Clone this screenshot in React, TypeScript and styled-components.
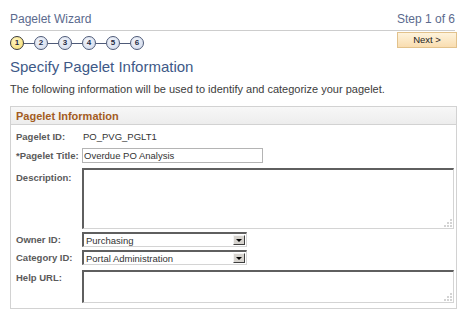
import React from "react";
import styled, { createGlobalStyle } from "styled-components";

const GlobalStyle = createGlobalStyle`
  html, body { margin: 0; padding: 0; background: #ffffff; }
  body { font-family: "Liberation Sans", Arial, sans-serif; color: #333; }
  * { box-sizing: border-box; }
`;

const Page = styled.div`
  width: 474px;
  height: 313px;
  overflow: hidden;
  background: #fff;
`;

const TitleBar = styled.div`
  display: flex;
  justify-content: space-between;
  align-items: flex-end;
  margin: 0 19px 0 10px;
  padding: 12px 0 4px;
  border-bottom: 1px solid #cdcdcd;
  font-size: 12px;
  line-height: 14px;
  color: #5b6a8e;
`;

const NavRow = styled.div`
  display: flex;
  justify-content: space-between;
  align-items: flex-start;
  margin: 0 17px 0 10px;
`;

const Steps = styled.div`
  display: flex;
  align-items: center;
  margin-top: 5px;
`;

const StepCircle = styled.div<{ $active?: boolean }>`
  width: 14px;
  height: 14px;
  border-radius: 50%;
  border: 1.3px solid ${(p) => (p.$active ? "#3a3a3a" : "#4e5a78")};
  background: ${(p) =>
    p.$active
      ? "radial-gradient(circle at 40% 35%, #fff6c4, #f6dc6a)"
      : "radial-gradient(circle at 40% 35%, #f2f5fb, #cfd8ea)"};
  display: flex;
  align-items: center;
  justify-content: center;
  font-size: 8px;
  font-weight: bold;
  color: #1f2a44;
  line-height: 1;
`;

const Connector = styled.div`
  width: 10px;
  height: 1px;
  background: #4e5a78;
`;

const NextButton = styled.button`
  margin-top: 1px;
  width: 60px;
  height: 16px;
  padding: 0;
  border: 1px solid #e2c28c;
  background: linear-gradient(#fef3dc, #f9ddb0);
  font-family: "Liberation Sans", Arial, sans-serif;
  font-size: 9.5px;
  color: #222;
  line-height: 14px;
  text-align: center;
`;

const Heading = styled.h1`
  margin: 8px 0 0 10px;
  font-size: 15px;
  line-height: 18px;
  font-weight: normal;
  color: #3e5987;
`;

const Intro = styled.p`
  margin: 7px 0 0 10px;
  font-size: 11px;
  line-height: 13px;
  color: #3c3c3c;
`;

const GroupBox = styled.section`
  margin: 10px 17px 0 10px;
  border: 1px solid #d2d2d2;
`;

const GroupHeader = styled.div`
  height: 18px;
  border-bottom: 1px solid #d2d2d2;
  background: linear-gradient(#f7f7f7, #ededed);
  padding-left: 5px;
  display: flex;
  align-items: center;
  font-size: 11px;
  font-weight: bold;
  color: #a35c1f;
`;

const Form = styled.div`
  padding: 5px 2px 5px 5px;
`;

const FieldRow = styled.div<{ $gap: number; $top?: boolean }>`
  display: grid;
  grid-template-columns: 66px 1fr;
  align-items: ${(p) => (p.$top ? "start" : "center")};
  margin-top: ${(p) => p.$gap}px;
`;

const Label = styled.label<{ $pad?: number }>`
  font-size: 9.5px;
  font-weight: bold;
  line-height: 13px;
  color: #5a5a5a;
  padding-top: ${(p) => p.$pad ?? 0}px;
  white-space: nowrap;
`;

const StaticValue = styled.span`
  font-size: 9.5px;
  line-height: 13px;
  color: #333;
  padding-left: 1px;
`;

const TextInput = styled.input`
  width: 181px;
  height: 15px;
  border: 1px solid #b4b4b4;
  padding: 0 1px;
  font-family: "Liberation Sans", Arial, sans-serif;
  font-size: 9.5px;
  color: #333;
  outline: none;
`;

const dot = (r: number, b: number) =>
  `radial-gradient(circle, #a8a8a8 45%, transparent 55%) right ${r}px bottom ${b}px / 2px 2px no-repeat`;

const TextArea = styled.textarea<{ $h: number }>`
  display: block;
  width: 372px;
  height: ${(p) => p.$h}px;
  border-style: solid;
  border-width: 2px 1px 1px 2px;
  border-color: #5f5f5f #d4d4d4 #d4d4d4 #5f5f5f;
  resize: none;
  outline: none;
  padding: 1px 2px;
  font-family: "Liberation Sans", Arial, sans-serif;
  font-size: 9.5px;
  background: ${[dot(1, 1), dot(4, 1), dot(7, 1), dot(1, 4), dot(4, 4), dot(1, 7)].join(", ")}, #fff;
`;

const SelectBox = styled.div`
  width: 165px;
  height: 15px;
  display: flex;
  align-items: center;
  justify-content: space-between;
  border-style: solid;
  border-width: 2px 1px 1px 2px;
  border-color: #5f5f5f #d4d4d4 #d4d4d4 #5f5f5f;
  padding: 0 1px 0 2px;
  font-size: 9.5px;
  color: #333;
  background: #fff;
`;

const ArrowButton = styled.span`
  width: 12px;
  height: 10px;
  display: flex;
  align-items: center;
  justify-content: center;
  background: #d6d3ce;
  border: 1px solid;
  border-color: #f4f4f4 #3f3f3f #3f3f3f #f4f4f4;
  &::after {
    content: "";
    width: 0;
    height: 0;
    border-left: 3px solid transparent;
    border-right: 3px solid transparent;
    border-top: 3px solid #000;
  }
`;

function Select({ value }: { value: string }) {
  return (
    <SelectBox>
      <span>{value}</span>
      <ArrowButton />
    </SelectBox>
  );
}

export default function App() {
  const steps = [1, 2, 3, 4, 5, 6];
  return (
    <Page>
      <GlobalStyle />
      <TitleBar>
        <span>Pagelet Wizard</span>
        <span>Step 1 of 6</span>
      </TitleBar>
      <NavRow>
        <Steps>
          {steps.map((n) => (
            <React.Fragment key={n}>
              {n > 1 && <Connector />}
              <StepCircle $active={n === 1}>{n}</StepCircle>
            </React.Fragment>
          ))}
        </Steps>
        <NextButton type="button">Next &gt;</NextButton>
      </NavRow>
      <Heading>Specify Pagelet Information</Heading>
      <Intro>The following information will be used to identify and categorize your pagelet.</Intro>
      <GroupBox>
        <GroupHeader>Pagelet Information</GroupHeader>
        <Form>
          <FieldRow $gap={0}>
            <Label>Pagelet ID:</Label>
            <StaticValue>PO_PVG_PGLT1</StaticValue>
          </FieldRow>
          <FieldRow $gap={5}>
            <Label>*Pagelet Title:</Label>
            <TextInput readOnly value="Overdue PO Analysis" />
          </FieldRow>
          <FieldRow $gap={5} $top>
            <Label $pad={3}>Description:</Label>
            <TextArea $h={61} readOnly value="" />
          </FieldRow>
          <FieldRow $gap={3}>
            <Label>Owner ID:</Label>
            <Select value="Purchasing" />
          </FieldRow>
          <FieldRow $gap={3}>
            <Label>Category ID:</Label>
            <Select value="Portal Administration" />
          </FieldRow>
          <FieldRow $gap={5} $top>
            <Label $pad={1}>Help URL:</Label>
            <TextArea $h={33} readOnly value="" />
          </FieldRow>
        </Form>
      </GroupBox>
    </Page>
  );
}
